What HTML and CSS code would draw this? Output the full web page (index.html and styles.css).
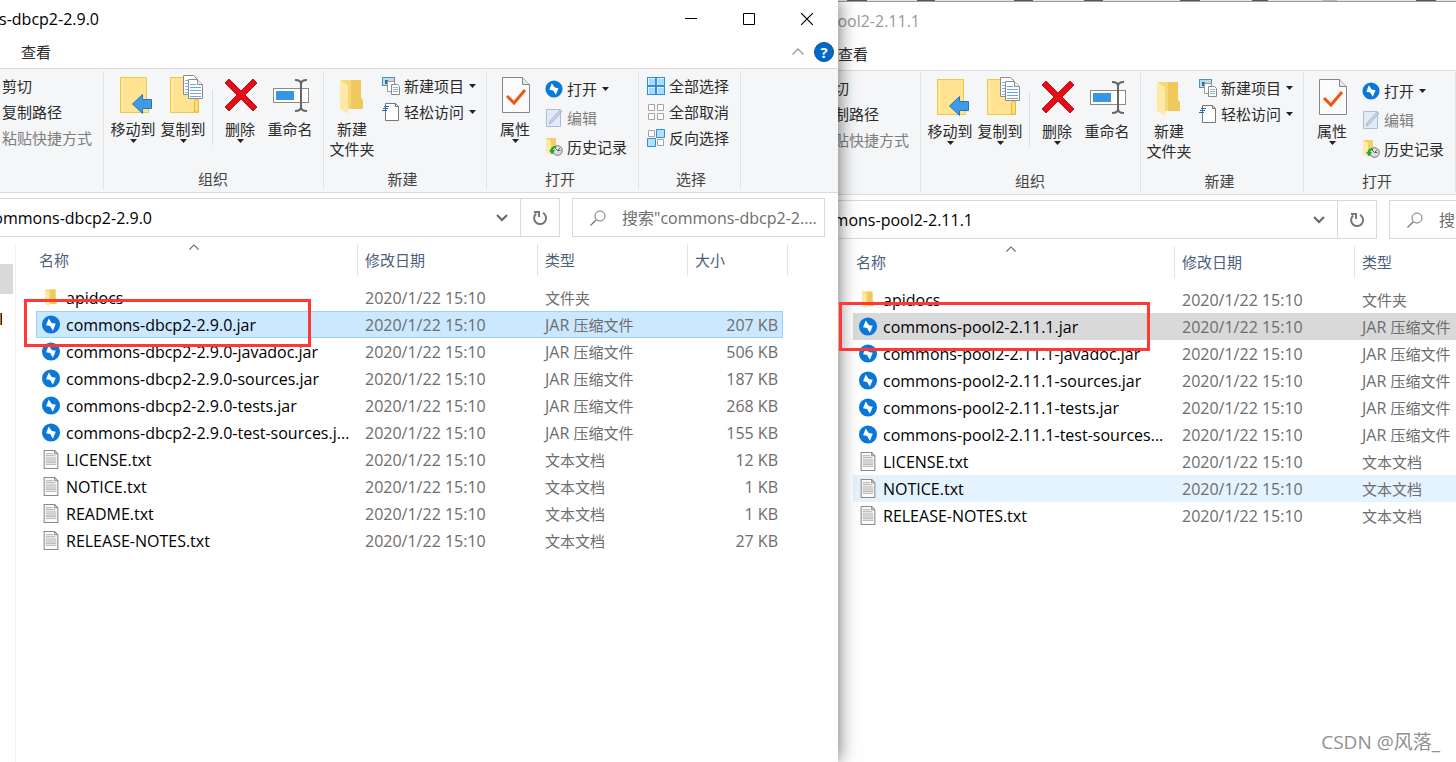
FILE: index.html
```html
<!DOCTYPE html>
<html lang="zh-CN">
<head>
    <meta charset="UTF-8">
    <meta name="viewport" content="width=device-width, initial-scale=1.0">
    <title>commons-dbcp2-2.9.0</title>
    <link rel="stylesheet" href="styles.css">
</head>
<body>
    <!-- shared icons -->
    <svg class="sprite" aria-hidden="true">
        <symbol id="i-arrow" viewBox="0 0 7 4"><path d="M0 0h7L3.5 4z" fill="#222"/></symbol>
        <symbol id="i-moveto" viewBox="0 0 40 40">
            <path d="M7.500 2.500h26v22h2v13h-28z" fill="#ffe391" stroke="#ecc843"/>
            <path d="M9.500 4v32" stroke="#fff0bd"/>
            <path d="M19.500 29l10-9.500v5h9v9h-9v5z" fill="#3e9bea" stroke="#2474bd"/>
        </symbol>
        <symbol id="i-copyto" viewBox="0 0 40 40">
            <path d="M7.500 2.500h26v22h2v13h-28z" fill="#ffe391" stroke="#ecc843"/>
            <path d="M9.500 4v32" stroke="#fff0bd"/>
            <path d="M31.500 37V27q0-3 2-3t2 3v10z" fill="#ffdc78" stroke="#e5bb38"/>
            <path d="M20.500.500h10l4 4v15h-14z" fill="#fff" stroke="#8c8c8c"/>
            <path d="M22 5.500h4M22 8.500h3M22 11.500h3M22 14.500h3M22 17.500h3" stroke="#84b2f2"/>
            <path d="M25.500 4.500h9l5 5v14h-14z" fill="#fff" stroke="#8c8c8c"/>
            <path d="M34.500 4.500v5h5" fill="#eee" stroke="#8c8c8c"/>
            <path d="M27 9.500h6M27 12.500h11M27 15.500h11M27 18.500h11M27 21.500h11" stroke="#6ea1ef"/>
        </symbol>
        <symbol id="i-delete" viewBox="0 0 36 40">
            <path d="M3 8l4-4 12 12L31 4l4 4-12 12 12 12-4 4-12-12L7 36l-4-4 12-12z" fill="#e60b14" stroke="#b3161c"/>
        </symbol>
        <symbol id="i-rename" viewBox="0 0 40 40">
            <rect x="3.500" y="13.500" width="35" height="14" fill="#fff" stroke="#8a8a8a"/>
            <rect x="6" y="16" width="18" height="9" fill="#3596e6"/>
            <path d="M25 5q6 0 6 4v23q0 4-6 4M37 5q-6 0-6 4M31 32q0 4 6 4" fill="none" stroke="#666" stroke-width="2"/>
        </symbol>
        <symbol id="i-folder" viewBox="0 0 26 36">
            <path d="M2 1h20v18l2 2v9H2z" fill="#f8d775"/>
            <path d="M12 1h10v18l2 2v9H12z" fill="#efc95c"/>
            <path d="M1 1l8 5v29l-8-5z" fill="#ffe9a6"/>
        </symbol>
        <symbol id="i-newitem" viewBox="0 0 18 18">
            <rect x=".5" y=".5" width="12" height="8" fill="#b9ddef" stroke="#4f93b8"/>
            <rect x="3" y="3" width="3" height="4" fill="#356f8f"/>
            <path d="M5.500 4.500h7v10h-7z" fill="#fff" stroke="#999"/>
            <path d="M9.500 7.500h6l2 2v8h-8z" fill="#fff" stroke="#8a8a8a"/>
            <path d="M11 10.500h5M11 12.500h5M11 14.500h5" stroke="#8db5e0"/>
        </symbol>
        <symbol id="i-access" viewBox="0 0 18 18">
            <path d="M3.500.5h10l3 3v14h-13z" fill="#fff" stroke="#777"/>
            <path d="M13.500.5v3h3" fill="none" stroke="#777"/>
            <path d="M2 3.500h5M1 5.500h5M0 7.500h5" stroke="#1c6db5"/>
        </symbol>
        <symbol id="i-props" viewBox="0 0 36 40">
            <path d="M5.500 2.500h20l7 7v28h-27z" fill="#fbfbfb" stroke="#858585"/>
            <path d="M25.500 2.500v7h7" fill="#e6e6e6" stroke="#858585"/>
            <path d="M10 21l7 7 11-13" fill="none" stroke="#f0560f" stroke-width="3"/>
        </symbol>
        <symbol id="i-bolt" viewBox="0 0 20 20">
            <circle cx="10" cy="10" r="9.500" fill="#0a78d8"/>
            <path d="M7.600 3.600l3.200 4.800 4.200.9-3 7.200-2.900-4.900-4.300-.9z" fill="#fff"/>
        </symbol>
        <symbol id="i-edit" viewBox="0 0 18 18">
            <path d="M1.500.5h14v17h-14z" fill="#e3eaf5" stroke="#aebdd5"/>
            <path d="M4 15l1-3L14.500 1.500l2.500 1L7 13.500z" fill="#c3d1e6" stroke="#9fb1cd" stroke-width=".8"/>
        </symbol>
        <symbol id="i-history" viewBox="0 0 18 18">
            <path d="M1 0h10v16H5L1 14z" fill="#f3cf67"/>
            <path d="M1 0l5 3v14l-5-3z" fill="#ffe9a6"/>
            <circle cx="12.500" cy="12.500" r="4.800" fill="#ddd" stroke="#777"/>
            <path d="M10 10l2.500 2.500L15 10M12.500 12.500h3" fill="none" stroke="#666"/>
            <path d="M11 8q-5 0-5.500 4H4l3 4.500 3-4.500H8q0-2 3-2z" fill="#20a934"/>
        </symbol>
        <symbol id="i-all" viewBox="0 0 18 18">
            <rect width="18" height="18" fill="#2f8ede"/>
            <path d="M1 1h7v7H1zM10 1h7v7h-7zM1 10h7v7H1zM10 10h7v7h-7z" fill="#dff1ff"/>
            <path d="M2 2h6v6H2zM11 2h6v6h-6zM2 11h6v6H2zM11 11h6v6h-6z" fill="#a9dbfb"/>
        </symbol>
        <symbol id="i-none" viewBox="0 0 18 18">
            <path d="M1.500 1.500h6v6h-6zM10.500 1.500h6v6h-6zM1.500 10.500h6v6h-6zM10.500 10.500h6v6h-6z" fill="#fff" stroke="#a5a5a5"/>
        </symbol>
        <symbol id="i-invert" viewBox="0 0 18 18">
            <path d="M1.500 1.500h6v6h-6zM10.500 10.500h6v6h-6z" fill="#fff" stroke="#a5a5a5"/>
            <path d="M9.500.5h8v8h-8zM.5 9.500h8v8h-8z" fill="#b5e0fc" stroke="#2f8ede"/>
        </symbol>
        <symbol id="i-text" viewBox="0 0 14 18">
            <path d="M.5.5h10l3 3v14H.5z" fill="#fafafa" stroke="#8a8a8a"/>
            <path d="M10.500.5v3h3" fill="none" stroke="#8a8a8a"/>
            <path d="M2 3.500h7M2 5.500h9M2 7.500h10M2 9.500h10M2 11.500h10M2 13.500h10" stroke="#aaa"/>
        </symbol>
        <symbol id="i-down" viewBox="0 0 12 8"><path d="M1 1l5 5 5-5" fill="none" stroke="#666" stroke-width="2"/></symbol>
        <symbol id="i-refresh" viewBox="0 0 16 16">
            <path d="M11 2.800A6 6 0 1 1 4.200 3.500" fill="none" stroke="#777" stroke-width="2"/>
            <path d="M2 2h5v5" fill="none" stroke="#777" stroke-width="2"/>
        </symbol>
        <symbol id="i-search" viewBox="0 0 16 16">
            <circle cx="10" cy="6" r="5" fill="none" stroke="#777"/>
            <path d="M6.300 9.700L.5 15.500" stroke="#777" stroke-width="1.300"/>
        </symbol>
        <symbol id="i-up" viewBox="0 0 12 7"><path d="M.5 6.500L6 1l5.500 5.500" fill="none" stroke="currentColor" stroke-width="1.300"/></symbol>
    </svg>

    <div class="desktop">
        <!-- bottom edge of the toolbar behind the windows -->
        <svg class="behind" width="618" height="2" aria-hidden="true">
            <rect width="618" height="1" fill="#e3e3e3"/>
            <path d="M9 0h20v1H9zM79 0h18v1H79zM176 0h19v1h-19zM246 0h19v1h-19zM342 0h20v1h-20zM414 0h16v1h-16zM578 0h20v1h-20z" fill="#55535c"/>
            <path d="M484 0h15v1h-15z" fill="#b5b5b5"/>
            <rect y="1" width="618" height="1" fill="#9b9b9b"/>
        </svg>

        <section class="window window-back">
            <header class="titlebar">
                <h2 class="title"><span>commons-pool2-2.11.1</span></h2>
            </header>
            <div class="tabs">
                <button class="tab">查看</button>
            </div>
            <div class="ribbon">
                <div class="group group-clipboard">
                    <div class="tools">
                        <div class="list">
                            <button class="small">剪切</button>
                            <button class="small">复制路径</button>
                            <button class="small" disabled>粘贴快捷方式</button>
                        </div>
                    </div>
                </div>
                <div class="group group-organize">
                    <div class="tools">
                        <button class="big"><svg><use href="#i-moveto"/></svg>移动到<svg class="arrow"><use href="#i-arrow"/></svg></button>
                        <button class="big"><svg><use href="#i-copyto"/></svg>复制到<svg class="arrow"><use href="#i-arrow"/></svg></button>
                        <div class="separator"></div>
                        <button class="big"><svg><use href="#i-delete"/></svg>删除<svg class="arrow"><use href="#i-arrow"/></svg></button>
                        <button class="big"><svg><use href="#i-rename"/></svg>重命名</button>
                    </div>
                    <div class="group-name">组织</div>
                </div>
                <div class="group group-new">
                    <div class="tools">
                        <button class="big"><svg class="folder"><use href="#i-folder"/></svg>新建<br>文件夹</button>
                        <div class="list">
                            <button class="small"><svg><use href="#i-newitem"/></svg>新建项目<svg class="arrow"><use href="#i-arrow"/></svg></button>
                            <button class="small"><svg><use href="#i-access"/></svg>轻松访问<svg class="arrow"><use href="#i-arrow"/></svg></button>
                        </div>
                    </div>
                    <div class="group-name">新建</div>
                </div>
                <div class="group group-open">
                    <div class="tools">
                        <button class="big"><svg><use href="#i-props"/></svg>属性<svg class="arrow"><use href="#i-arrow"/></svg></button>
                        <div class="list">
                            <button class="small"><svg><use href="#i-bolt"/></svg>打开<svg class="arrow"><use href="#i-arrow"/></svg></button>
                            <button class="small" disabled><svg><use href="#i-edit"/></svg>编辑</button>
                            <button class="small"><svg><use href="#i-history"/></svg>历史记录</button>
                        </div>
                    </div>
                    <div class="group-name">打开</div>
                </div>
            </div>
            <div class="navbar">
                <div class="address">
                    <div class="path"><span>commons-pool2-2.11.1</span></div>
                    <button class="history" aria-label="历史"><svg width="12" height="8"><use href="#i-down"/></svg></button>
                    <button class="refresh" aria-label="刷新"><svg width="16" height="16"><use href="#i-refresh"/></svg></button>
                </div>
                <label class="search">
                    <svg width="16" height="16"><use href="#i-search"/></svg>
                    <input type="text" aria-label="搜索" placeholder='搜索"commons-pool2-2....'>
                </label>
            </div>
            <div class="content">
                <div class="tree"></div>
                <table class="files">
                    <thead>
                        <tr>
                            <th class="name">名称<svg class="sort"><use href="#i-up"/></svg></th>
                            <th class="date">修改日期</th>
                            <th class="type">类型</th>
                        </tr>
                    </thead>
                    <tbody>
                        <tr><td><div class="file"><svg class="i-folder"><use href="#i-folder"/></svg>apidocs</div></td><td>2020/1/22 15:10</td><td class="type">文件夹</td></tr>
                        <tr class="inactive"><td><div class="file"><svg><use href="#i-bolt"/></svg>commons-pool2-2.11.1.jar</div></td><td>2020/1/22 15:10</td><td class="type"><span class="latin">JAR </span>压缩文件</td></tr>
                        <tr><td><div class="file"><svg><use href="#i-bolt"/></svg>commons-pool2-2.11.1-javadoc.jar</div></td><td>2020/1/22 15:10</td><td class="type"><span class="latin">JAR </span>压缩文件</td></tr>
                        <tr><td><div class="file"><svg><use href="#i-bolt"/></svg>commons-pool2-2.11.1-sources.jar</div></td><td>2020/1/22 15:10</td><td class="type"><span class="latin">JAR </span>压缩文件</td></tr>
                        <tr><td><div class="file"><svg><use href="#i-bolt"/></svg>commons-pool2-2.11.1-tests.jar</div></td><td>2020/1/22 15:10</td><td class="type"><span class="latin">JAR </span>压缩文件</td></tr>
                        <tr><td><div class="file"><svg><use href="#i-bolt"/></svg>commons-pool2-2.11.1-test-sources...</div></td><td>2020/1/22 15:10</td><td class="type"><span class="latin">JAR </span>压缩文件</td></tr>
                        <tr><td><div class="file"><svg><use href="#i-text"/></svg>LICENSE.txt</div></td><td>2020/1/22 15:10</td><td class="type">文本文档</td></tr>
                        <tr class="hover"><td><div class="file"><svg><use href="#i-text"/></svg>NOTICE.txt</div></td><td>2020/1/22 15:10</td><td class="type">文本文档</td></tr>
                        <tr><td><div class="file"><svg><use href="#i-text"/></svg>RELEASE-NOTES.txt</div></td><td>2020/1/22 15:10</td><td class="type">文本文档</td></tr>
                    </tbody>
                </table>
            </div>
        </section>

        <section class="window window-front">
            <header class="titlebar">
                <h1 class="title"><span>commons-dbcp2-2.9.0</span></h1>
                <div class="controls">
                    <button aria-label="最小化"><svg width="12" height="12"><path d="M0 5.500h12" stroke="#000"/></svg></button>
                    <button aria-label="最大化"><svg width="12" height="12"><path d="M.5.5h11v11H.5z" fill="none" stroke="#000"/></svg></button>
                    <button aria-label="关闭"><svg width="12" height="12"><path d="M0 0l12 12M12 0L0 12" stroke="#000" stroke-width="1.200"/></svg></button>
                </div>
            </header>
            <div class="tabs">
                <button class="tab">查看</button>
                <button class="collapse" aria-label="折叠功能区"><svg width="12" height="7"><use href="#i-up"/></svg></button>
                <button class="help" aria-label="帮助">?</button>
            </div>
            <div class="ribbon">
                <div class="group group-clipboard">
                    <div class="tools">
                        <div class="list">
                            <button class="small">剪切</button>
                            <button class="small">复制路径</button>
                            <button class="small" disabled>粘贴快捷方式</button>
                        </div>
                    </div>
                </div>
                <div class="group group-organize">
                    <div class="tools">
                        <button class="big"><svg><use href="#i-moveto"/></svg>移动到<svg class="arrow"><use href="#i-arrow"/></svg></button>
                        <button class="big"><svg><use href="#i-copyto"/></svg>复制到<svg class="arrow"><use href="#i-arrow"/></svg></button>
                        <div class="separator"></div>
                        <button class="big"><svg><use href="#i-delete"/></svg>删除<svg class="arrow"><use href="#i-arrow"/></svg></button>
                        <button class="big"><svg><use href="#i-rename"/></svg>重命名</button>
                    </div>
                    <div class="group-name">组织</div>
                </div>
                <div class="group group-new">
                    <div class="tools">
                        <button class="big"><svg class="folder"><use href="#i-folder"/></svg>新建<br>文件夹</button>
                        <div class="list">
                            <button class="small"><svg><use href="#i-newitem"/></svg>新建项目<svg class="arrow"><use href="#i-arrow"/></svg></button>
                            <button class="small"><svg><use href="#i-access"/></svg>轻松访问<svg class="arrow"><use href="#i-arrow"/></svg></button>
                        </div>
                    </div>
                    <div class="group-name">新建</div>
                </div>
                <div class="group group-open">
                    <div class="tools">
                        <button class="big"><svg><use href="#i-props"/></svg>属性<svg class="arrow"><use href="#i-arrow"/></svg></button>
                        <div class="list">
                            <button class="small"><svg><use href="#i-bolt"/></svg>打开<svg class="arrow"><use href="#i-arrow"/></svg></button>
                            <button class="small" disabled><svg><use href="#i-edit"/></svg>编辑</button>
                            <button class="small"><svg><use href="#i-history"/></svg>历史记录</button>
                        </div>
                    </div>
                    <div class="group-name">打开</div>
                </div>
                <div class="group group-select">
                    <div class="tools">
                        <div class="list">
                            <button class="small"><svg><use href="#i-all"/></svg>全部选择</button>
                            <button class="small"><svg><use href="#i-none"/></svg>全部取消</button>
                            <button class="small"><svg><use href="#i-invert"/></svg>反向选择</button>
                        </div>
                    </div>
                    <div class="group-name">选择</div>
                </div>
            </div>
            <div class="navbar">
                <div class="address">
                    <div class="path"><span>commons-dbcp2-2.9.0</span></div>
                    <button class="history" aria-label="历史"><svg width="12" height="8"><use href="#i-down"/></svg></button>
                    <button class="refresh" aria-label="刷新"><svg width="16" height="16"><use href="#i-refresh"/></svg></button>
                </div>
                <label class="search">
                    <svg width="16" height="16"><use href="#i-search"/></svg>
                    <input type="text" aria-label="搜索" placeholder='搜索"commons-dbcp2-2....'>
                </label>
            </div>
            <div class="content">
                <div class="tree">
                    <div class="tree-selected"></div>
                    <div class="tree-item"></div>
                </div>
                <table class="files">
                    <thead>
                        <tr>
                            <th class="name">名称<svg class="sort"><use href="#i-up"/></svg></th>
                            <th class="date">修改日期</th>
                            <th class="type">类型</th>
                            <th class="size">大小</th>
                        </tr>
                    </thead>
                    <tbody>
                        <tr><td><div class="file"><svg class="i-folder"><use href="#i-folder"/></svg>apidocs</div></td><td>2020/1/22 15:10</td><td class="type">文件夹</td><td class="size"></td></tr>
                        <tr class="selected"><td><div class="file"><svg><use href="#i-bolt"/></svg>commons-dbcp2-2.9.0.jar</div></td><td>2020/1/22 15:10</td><td class="type"><span class="latin">JAR </span>压缩文件</td><td class="size">207 KB</td></tr>
                        <tr><td><div class="file"><svg><use href="#i-bolt"/></svg>commons-dbcp2-2.9.0-javadoc.jar</div></td><td>2020/1/22 15:10</td><td class="type"><span class="latin">JAR </span>压缩文件</td><td class="size">506 KB</td></tr>
                        <tr><td><div class="file"><svg><use href="#i-bolt"/></svg>commons-dbcp2-2.9.0-sources.jar</div></td><td>2020/1/22 15:10</td><td class="type"><span class="latin">JAR </span>压缩文件</td><td class="size">187 KB</td></tr>
                        <tr><td><div class="file"><svg><use href="#i-bolt"/></svg>commons-dbcp2-2.9.0-tests.jar</div></td><td>2020/1/22 15:10</td><td class="type"><span class="latin">JAR </span>压缩文件</td><td class="size">268 KB</td></tr>
                        <tr><td><div class="file"><svg><use href="#i-bolt"/></svg>commons-dbcp2-2.9.0-test-sources.j...</div></td><td>2020/1/22 15:10</td><td class="type"><span class="latin">JAR </span>压缩文件</td><td class="size">155 KB</td></tr>
                        <tr><td><div class="file"><svg><use href="#i-text"/></svg>LICENSE.txt</div></td><td>2020/1/22 15:10</td><td class="type">文本文档</td><td class="size">12 KB</td></tr>
                        <tr><td><div class="file"><svg><use href="#i-text"/></svg>NOTICE.txt</div></td><td>2020/1/22 15:10</td><td class="type">文本文档</td><td class="size">1 KB</td></tr>
                        <tr><td><div class="file"><svg><use href="#i-text"/></svg>README.txt</div></td><td>2020/1/22 15:10</td><td class="type">文本文档</td><td class="size">1 KB</td></tr>
                        <tr><td><div class="file"><svg><use href="#i-text"/></svg>RELEASE-NOTES.txt</div></td><td>2020/1/22 15:10</td><td class="type">文本文档</td><td class="size">27 KB</td></tr>
                    </tbody>
                </table>
            </div>
        </section>

        <div class="mark mark-front"></div>
        <div class="mark mark-back"></div>
        <div class="watermark">CSDN @风落_</div>
    </div>
</body>
</html>
```
FILE: styles.css
```css
* {
    box-sizing: border-box;
}

body {
    margin: 0;
    background-color: #fff;
    color: #000;
    font-family: "Open Sans", "Noto Sans CJK SC", sans-serif;
    font-size: 15px;
    line-height: 20px;
}

button {
    margin: 0;
    padding: 0;
    border: none;
    background: none;
    color: #2b2b2b;
    font: inherit;
    white-space: nowrap;
}

svg {
    display: block;
    flex: none;
}

.sprite {
    position: absolute;
    width: 0;
    height: 0;
}

.desktop {
    position: relative;
    height: 100vh;
    overflow: hidden;
}

.behind {
    position: absolute;
    top: 0;
    right: 0;
}

/* windows */
.window {
    position: absolute;
    bottom: 0;
    width: 838px;
    display: flex;
    flex-direction: column;
    background-color: #fff;
}

.window-front {
    top: 0;
    left: 0;
    box-shadow: 0 0 18px rgba(0, 0, 0, 0.6);
}

.window-back {
    top: 2px;
    left: 817px;
}

.titlebar {
    display: flex;
    justify-content: space-between;
    align-items: center;
    height: 37px;
}

.title {
    display: flex;
    justify-content: flex-end;
    width: 99px;
    margin: 0;
    overflow: hidden;
    font-size: 16px;
    font-weight: normal;
    white-space: nowrap;
}

.window-back .title {
    width: 103px;
    color: #999;
}

.controls {
    display: flex;
    align-self: stretch;
    padding-right: 2px;
}

.controls button {
    display: flex;
    align-items: center;
    justify-content: center;
    width: 58px;
}

.tabs {
    display: flex;
    align-items: center;
    height: 31px;
    padding: 0 4px 2px 21px;
}

.collapse {
    margin-left: auto;
    margin-right: 10px;
    color: #999;
}

.help {
    width: 20px;
    height: 20px;
    border: 1px solid #0a4f96;
    border-radius: 50%;
    background-color: #0069c9;
    color: #fff;
    font-weight: bold;
    line-height: 18px;
}

/* ribbon */
.ribbon {
    display: flex;
    height: 125px;
    padding: 2px 0;
    border-top: 1px solid #dadbdc;
    border-bottom: 1px solid #dadbdc;
    background-color: #f5f6f7;
}

.group {
    display: flex;
    flex-direction: column;
    justify-content: space-between;
    border-right: 1px solid #e2e3e4;
}

.group-clipboard {
    width: 104px;
    padding-left: 2px;
}

.group-organize {
    width: 220px;
    padding-left: 4px;
}

.group-new {
    width: 163px;
}

.group-open {
    width: 152px;
}

.group-select {
    width: 102px;
    padding-left: 8px;
}

.tools {
    display: flex;
}

.group-name {
    padding: 0 5px 1px 0;
    color: #444;
    text-align: center;
}

.big {
    display: flex;
    flex-direction: column;
    align-items: center;
    width: 50px;
    padding-top: 4px;
}

.big svg {
    width: 40px;
    height: 40px;
    margin-bottom: 4px;
}

.big .folder {
    height: 36px;
    margin: 4px 0;
}

.big .arrow {
    width: 7px;
    height: 4px;
    margin: 0;
}

.group-new .big,
.group-open .big {
    width: 56px;
}

.separator {
    width: 1px;
    height: 55px;
    margin: 19px 2px 0 4px;
    background-color: #dcdddd;
}

.list {
    display: flex;
    flex-direction: column;
    align-items: flex-start;
    padding-top: 2px;
}

.small {
    display: flex;
    align-items: center;
    height: 26px;
}

.small svg {
    width: 18px;
    height: 18px;
    margin-right: 4px;
}

.small .arrow {
    width: 7px;
    height: 4px;
    margin: 0 0 0 5px;
}

.small:disabled {
    color: #7d7d7d;
}

.group-new .list,
.group-open .list {
    padding-left: 2px;
}

.group-open .list {
    padding-top: 3px;
}

.group-open .small {
    height: 29px;
}

/* address and search */
.navbar {
    display: flex;
    gap: 12px;
    height: 44px;
    padding: 5px 13px 0 0;
    font-size: 16px;
}

.address {
    display: flex;
    width: 560px;
    border: 1px solid #d9d9d9;
    border-left: none;
}

.path {
    display: flex;
    align-items: center;
    justify-content: flex-end;
    width: 152px;
    overflow: hidden;
    white-space: nowrap;
}

.window-back .path {
    width: 156px;
}

.history {
    margin-left: auto;
    padding: 0 12px;
}

.refresh {
    padding: 0 11px;
    border-left: 1px solid #d9d9d9;
}

.search {
    display: flex;
    flex: 1;
    align-items: center;
    gap: 16px;
    padding-left: 17px;
    border: 1px solid #d9d9d9;
}

.search input {
    flex: 1;
    min-width: 0;
    padding: 0;
    border: none;
    outline: none;
    font: inherit;
}

.search input::placeholder {
    color: #6d6d6d;
}

/* file list */
.content {
    display: flex;
    flex: 1;
    align-items: stretch;
    padding-top: 7px;
}

.tree {
    width: 16px;
    margin-right: 20px;
    padding-top: 20px;
    border-right: 1px solid #f2f2f2;
}

.tree-selected {
    width: 13px;
    height: 30px;
    background-color: #d9d9d9;
}

.tree-item {
    width: 2px;
    height: 12px;
    margin-top: 19px;
    border-left: 1px solid #c77526;
    background-color: #222;
}

.files {
    align-self: flex-start;
    table-layout: fixed;
    border-collapse: separate;
    border-spacing: 0;
}

.files th {
    position: relative;
    height: 32px;
    padding: 0 0 0 7px;
    border-right: 1px solid #e2e2e2;
    color: #4c607a;
    font-weight: normal;
    text-align: left;
}

.files .name {
    width: 322px;
    padding-left: 3px;
}

.files .date {
    width: 180px;
}

.files .type {
    width: 150px;
}

.files .size {
    width: 100px;
}

.sort {
    position: absolute;
    top: 0;
    left: 153px;
    width: 10px;
    height: 6px;
    color: #666;
}

.files tbody::before {
    content: "";
    display: block;
    height: 8px;
}

.files td {
    height: 27px;
    padding: 0 0 0 7px;
    color: #6d6d6d;
    font-size: 16px;
    white-space: nowrap;
}

.files td.type {
    font-size: 15px;
}

.files .latin {
    font-size: 16px;
}

.files td:first-child {
    padding-left: 5px;
    color: #000;
}

.files td.size {
    padding: 0 5px 0 0;
    border-right: 5px solid transparent;
    background-clip: padding-box;
    text-align: right;
}

.file {
    display: flex;
    align-items: center;
    gap: 5px;
}

.file svg {
    width: 20px;
    height: 19px;
}

.file .i-folder {
    height: 18px;
}

.selected td {
    background-color: #cce8ff;
    box-shadow: inset 0 1px #99d1ff, inset 0 -1px #99d1ff;
}

.selected td:first-child {
    box-shadow: inset 0 1px #99d1ff, inset 0 -1px #99d1ff, inset 1px 0 #99d1ff;
}

.selected td:last-child {
    box-shadow: inset 0 1px #99d1ff, inset 0 -1px #99d1ff, inset -1px 0 #99d1ff;
}

.inactive td {
    background-color: #d9d9d9;
}

.hover td {
    background-color: #e5f3ff;
}

/* red boxes drawn over the jar files */
.mark {
    position: absolute;
    border: 3px solid #ff3836;
}

.mark-front {
    top: 299px;
    left: 24px;
    width: 287px;
    height: 48px;
}

.mark-back {
    top: 302px;
    left: 839px;
    width: 311px;
    height: 49px;
}

.watermark {
    position: absolute;
    right: 16px;
    bottom: 8px;
    color: #8f8f8f;
    font-size: 19px;
    line-height: 24px;
}
```
